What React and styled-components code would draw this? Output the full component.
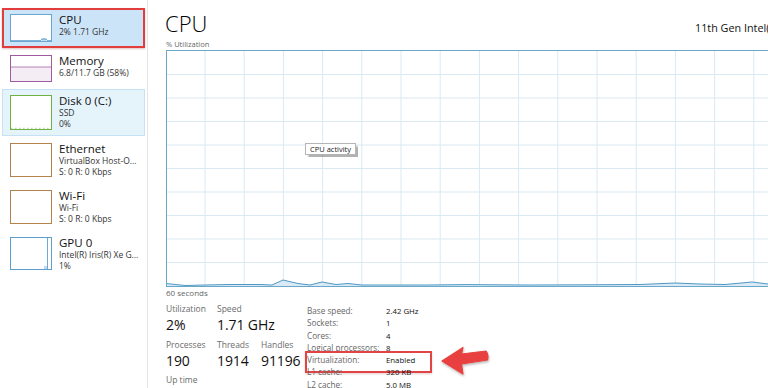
import React from "react";
import styled, { createGlobalStyle } from "styled-components";

const Global = createGlobalStyle`
  html, body { margin: 0; padding: 0; background: #fff; }
  body { font-family: "Open Sans", "Noto Sans", sans-serif; color: #000; }
  * { box-sizing: border-box; }
`;

const Window = styled.div`
  width: 768px;
  height: 388px;
  display: flex;
  overflow: hidden;
  background: #fff;
  position: relative;
`;

const Sidebar = styled.nav`
  width: 148px;
  flex-shrink: 0;
  border-right: 1px solid #e4e4e4;
  padding-top: 8px;
  display: flex;
  flex-direction: column;
`;

const Item = styled.div`
  display: flex;
  gap: 7px;
  margin: 0 2px 1px 2px;
  padding: ${(p) => (p.$hover ? "5px 7px" : "4px 6px")};
  border: ${(p) =>
    p.$flag ? "2px solid #e23c3c" : p.$hover ? "1px solid #c6e1f3" : "2px solid transparent"};
  background: ${(p) => (p.$selected ? "#cce4f7" : p.$hover ? "#e5f3fb" : "transparent")};
  box-shadow: ${(p) => (p.$flag ? "0 1px 2px rgba(120,0,0,0.25)" : "none")};
`;

const Thumb = styled.div`
  width: 42px;
  height: ${(p) => p.$h}px;
  flex-shrink: 0;
  border: 1px solid ${(p) => p.$c};
  background: #fff;
  position: relative;
  overflow: hidden;
  svg { display: block; width: 100%; height: 100%; }
`;

const ItemText = styled.div`
  display: flex;
  flex-direction: column;
  min-width: 0;
  margin-top: -1px;
`;

const ItemTitle = styled.div`
  font-size: 11.5px;
  line-height: 14px;
  color: #111;
  white-space: nowrap;
`;

const ItemSub = styled.div`
  font-size: 8.5px;
  line-height: 10.5px;
  color: #333;
  white-space: nowrap;
`;

const Main = styled.main`
  flex: 1;
  min-width: 0;
  padding-left: 18px;
  overflow: hidden;
  position: relative;
`;

const Header = styled.header`
  display: grid;
  grid-template-columns: 529px auto;
  align-items: baseline;
  margin-top: 9px;
  white-space: nowrap;
`;

const Title = styled.h1`
  margin: 0 0 0 -1px;
  font-size: 22px;
  line-height: 28px;
  font-weight: 300;
  color: #000;
`;

const Processor = styled.div`
  font-size: 10.8px;
  color: #111;
`;

const Caption = styled.div`
  font-size: 7.5px;
  line-height: 10px;
  color: #666;
  margin-top: 2px;
`;

const Chart = styled.div`
  width: 640px;
  height: 237px;
  margin-top: 1px;
  border: 1px solid #6aa7c9;
  position: relative;
  svg { display: block; }
`;

const Tooltip = styled.div`
  position: absolute;
  left: 138px;
  top: 92px;
  padding: 0 4px;
  height: 12px;
  line-height: 11px;
  font-size: 7.5px;
  color: #222;
  background: #fff;
  border: 1px solid #b5b5b5;
  box-shadow: 1.5px 1.5px 1px rgba(0, 0, 0, 0.3);
  white-space: nowrap;
`;

const Footnote = styled.div`
  font-size: 8px;
  line-height: 12px;
  color: #666;
`;

const Stats = styled.section`
  display: flex;
  margin-top: 4px;
`;

const LeftStats = styled.div`
  width: 141px;
  display: flex;
  flex-direction: column;
`;

const StatRow = styled.div`
  display: grid;
  grid-template-columns: 51px 44px 46px;
  margin-top: ${(p) => p.$mt || 0}px;
`;

const Stat = styled.div`
  display: flex;
  flex-direction: column;
  white-space: nowrap;
`;

const StatLabel = styled.div`
  font-size: 8.5px;
  line-height: 12px;
  color: #6b6b6b;
  margin-top: ${(p) => p.$mt || 0}px;
`;

const StatValue = styled.div`
  font-size: 14px;
  line-height: 20px;
  color: #111;
  letter-spacing: -0.1px;
`;

const InfoGrid = styled.div`
  display: flex;
  flex-direction: column;
  margin-top: 2px;
`;

const InfoRow = styled.div`
  display: grid;
  grid-template-columns: 79px auto;
  height: 12.3px;
  line-height: 12.3px;
  font-size: 8.2px;
  white-space: nowrap;
  position: relative;
  &::after {
    content: "";
    display: ${(p) => (p.$flag ? "block" : "none")};
    position: absolute;
    left: -2px;
    top: -3px;
    width: 123px;
    height: 18px;
    border: 2px solid #e04444;
    box-shadow: 0 1px 2px rgba(120, 0, 0, 0.2);
  }
`;

const InfoLabel = styled.span`
  color: #666;
`;

const InfoValue = styled.span`
  color: #111;
  font-size: 7.8px;
`;

const Arrow = styled.svg`
  position: absolute;
  left: 438px;
  top: 343px;
  width: 56px;
  height: 36px;
  overflow: visible;
`;

function CpuThumb() {
  return (
    <svg viewBox="0 0 40 26" preserveAspectRatio="none">
      <polyline points="0,25.5 30,25.5 31,23.5 32,25.5 33,23 34,25.5 35,23.5 36,25.5 40,25.5" fill="none" stroke="#5fa0cc" strokeWidth="0.8" />
    </svg>
  );
}

function MemThumb() {
  return (
    <svg viewBox="0 0 40 25" preserveAspectRatio="none">
      <rect x="0" y="11" width="40" height="14" fill="#f4edf4" />
      <line x1="0" y1="11" x2="40" y2="11" stroke="#a665a6" strokeWidth="0.8" />
    </svg>
  );
}

function DiskThumb() {
  return (
    <svg viewBox="0 0 40 33" preserveAspectRatio="none">
      <line x1="0" y1="32.3" x2="40" y2="32.3" stroke="#7cbf5a" strokeWidth="0.7" strokeDasharray="1.5 2.5" />
    </svg>
  );
}

function GpuThumb() {
  return (
    <svg viewBox="0 0 40 32" preserveAspectRatio="none">
      <rect x="33" y="29" width="3" height="3" fill="#bcd9ee" />
      <line x1="36.5" y1="0" x2="36.5" y2="32" stroke="#5b9fcf" strokeWidth="0.9" />
    </svg>
  );
}

const items = [
  { title: "CPU", subs: ["2% 1.71 GHz"], color: "#6aa6d0", h: 28, selected: true, flag: true, draw: <CpuThumb /> },
  { title: "Memory", subs: ["6.8/11.7 GB (58%)"], color: "#a05ba0", h: 27, draw: <MemThumb /> },
  { title: "Disk 0 (C:)", subs: ["SSD", "0%"], color: "#6fb244", h: 35, hover: true, draw: <DiskThumb /> },
  { title: "Ethernet", subs: ["VirtualBox Host-O...", "S: 0 R: 0 Kbps"], color: "#b3834d", h: 34 },
  { title: "Wi-Fi", subs: ["Wi-Fi", "S: 0 R: 0 Kbps"], color: "#b3834d", h: 34 },
  { title: "GPU 0", subs: ["Intel(R) Iris(R) Xe G...", "1%"], color: "#5b9fcf", h: 33, draw: <GpuThumb /> },
];

const linePts = [
  [-1, 232.5], [18, 234.5], [38, 234], [63, 233.5], [93, 233.5], [105, 234], [116, 229],
  [131, 232.5], [143, 234], [155, 231], [169, 233.5], [181, 232.5], [195, 234], [260, 234],
  [300, 233.6], [360, 234], [420, 233.8], [473, 233.5], [508, 232], [533, 233], [558, 233.5],
  [585, 231], [601, 233], [640, 233.5],
];

function CpuChart() {
  const W = 638;
  const H = 235;
  const vlines = [];
  for (let x = 38; x < W; x += 39.2) vlines.push(x);
  const hlines = [];
  for (let i = 1; i < 10; i++) hlines.push(i * 23.5);
  const pts = linePts.map((p) => p.join(",")).join(" ");
  return (
    <svg width={W} height={H} viewBox={`0 0 ${W} ${H}`}>
      {vlines.map((x) => (
        <line key={"v" + x} x1={x} y1="0" x2={x} y2={H} stroke="#dbe9f2" strokeWidth="1" />
      ))}
      {hlines.map((y) => (
        <line key={"h" + y} x1="0" y1={y} x2={W} y2={y} stroke="#dbe9f2" strokeWidth="1" />
      ))}
      <polygon points={`-1,${H} ${pts} ${W},${H}`} fill="#d9eaf6" />
      <polyline points={pts} fill="none" stroke="#4f98c4" strokeWidth="1" />
    </svg>
  );
}

const info = [
  ["Base speed:", "2.42 GHz"],
  ["Sockets:", "1"],
  ["Cores:", "4"],
  ["Logical processors:", "8"],
  ["Virtualization:", "Enabled", true],
  ["L1 cache:", "320 KB"],
  ["L2 cache:", "5.0 MB"],
];

export default function App() {
  return (
    <>
      <Global />
      <Window>
        <Sidebar>
          {items.map((it) => (
            <Item key={it.title} $selected={it.selected} $flag={it.flag} $hover={it.hover}>
              <Thumb $c={it.color} $h={it.h}>{it.draw}</Thumb>
              <ItemText>
                <ItemTitle>{it.title}</ItemTitle>
                {it.subs.map((s) => (
                  <ItemSub key={s}>{s}</ItemSub>
                ))}
              </ItemText>
            </Item>
          ))}
        </Sidebar>
        <Main>
          <Header>
            <Title>CPU</Title>
            <Processor>11th Gen Intel(R) Core(TM) i5-1135G7 @ 2.40GHz</Processor>
          </Header>
          <Caption>% Utilization</Caption>
          <Chart>
            <CpuChart />
            <Tooltip>CPU activity</Tooltip>
          </Chart>
          <Footnote>60 seconds</Footnote>
          <Stats>
            <LeftStats>
              <StatRow>
                <Stat>
                  <StatLabel>Utilization</StatLabel>
                  <StatValue>2%</StatValue>
                </Stat>
                <Stat>
                  <StatLabel>Speed</StatLabel>
                  <StatValue>1.71 GHz</StatValue>
                </Stat>
              </StatRow>
              <StatRow $mt={4}>
                <Stat>
                  <StatLabel>Processes</StatLabel>
                  <StatValue>190</StatValue>
                </Stat>
                <Stat>
                  <StatLabel>Threads</StatLabel>
                  <StatValue>1914</StatValue>
                </Stat>
                <Stat>
                  <StatLabel>Handles</StatLabel>
                  <StatValue>91196</StatValue>
                </Stat>
              </StatRow>
              <StatLabel $mt={3}>Up time</StatLabel>
            </LeftStats>
            <InfoGrid>
              {info.map(([l, v, f]) => (
                <InfoRow key={l} $flag={f}>
                  <InfoLabel>{l}</InfoLabel>
                  <InfoValue>{v}</InfoValue>
                </InfoRow>
              ))}
            </InfoGrid>
          </Stats>
        </Main>
        <Arrow viewBox="438 343 56 36">
          <defs>
            <filter id="sh" x="-20%" y="-20%" width="140%" height="160%">
              <feDropShadow dx="0.5" dy="1.5" stdDeviation="1" floodColor="#000" floodOpacity="0.3" />
            </filter>
          </defs>
          <path
            d="M442,361 L463,347.5 L461.5,354 L486,351 Q489,355 487.5,360 L461.5,364 L463,374 Z"
            fill="#e8403f"
            stroke="#e8403f"
            strokeWidth="1.2"
            strokeLinejoin="round"
            filter="url(#sh)"
          />
        </Arrow>
      </Window>
    </>
  );
}
